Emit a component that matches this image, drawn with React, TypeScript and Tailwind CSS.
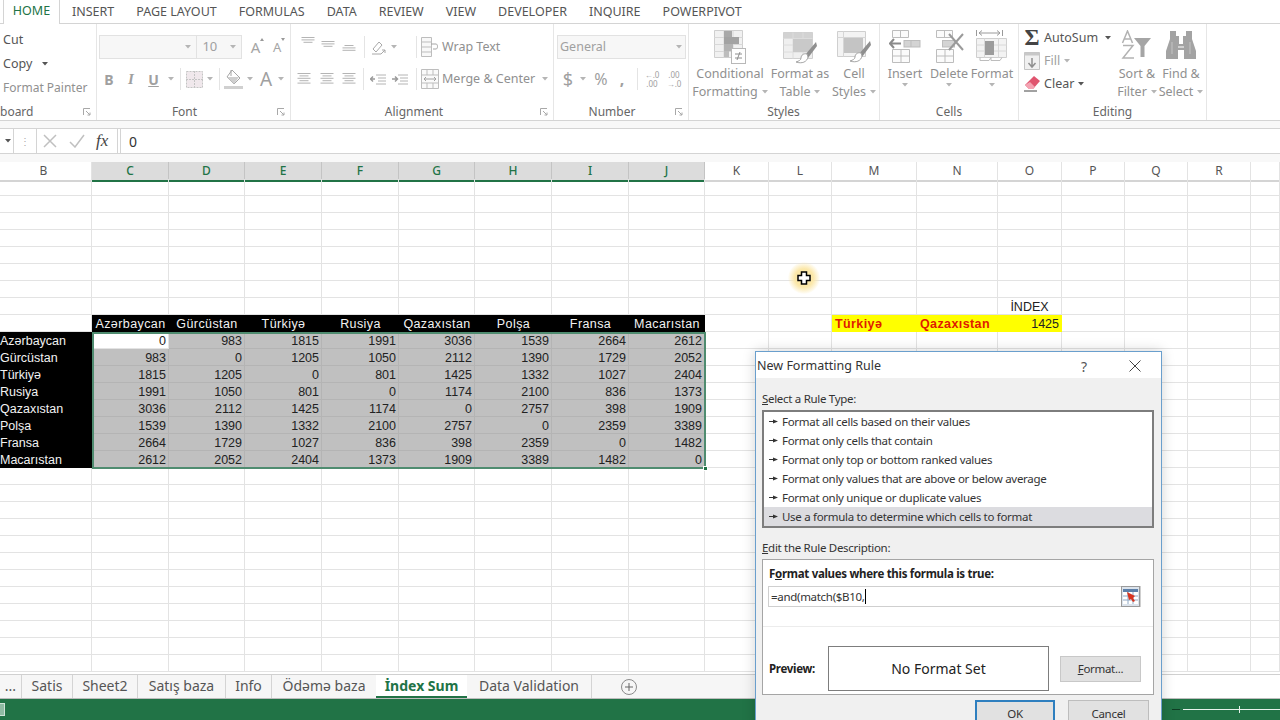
import React from 'react';

const names = ['Azərbaycan', 'Gürcüstan', 'Türkiyə', 'Rusiya', 'Qazaxıstan', 'Polşa', 'Fransa', 'Macarıstan'];
const distances = [
  [0, 983, 1815, 1991, 3036, 1539, 2664, 2612],
  [983, 0, 1205, 1050, 2112, 1390, 1729, 2052],
  [1815, 1205, 0, 801, 1425, 1332, 1027, 2404],
  [1991, 1050, 801, 0, 1174, 2100, 836, 1373],
  [3036, 2112, 1425, 1174, 0, 2757, 398, 1909],
  [1539, 1390, 1332, 2100, 2757, 0, 2359, 3389],
  [2664, 1729, 1027, 836, 398, 2359, 0, 1482],
  [2612, 2052, 2404, 1373, 1909, 3389, 1482, 0],
];

const columns = ['B', 'C', 'D', 'E', 'F', 'G', 'H', 'I', 'J', 'K', 'L', 'M', 'N', 'O', 'P', 'Q', 'R', ''];
const gridCols = 'grid grid-cols-[92px_77px_76px_77px_77px_76px_77px_77px_76px_64px_63px_85px_81px_64px_63px_63px_63px_29px]';
const ribbonTabs = ['INSERT', 'PAGE LAYOUT', 'FORMULAS', 'DATA', 'REVIEW', 'VIEW', 'DEVELOPER', 'INQUIRE', 'POWERPIVOT'];
const ruleTypes = [
  'Format all cells based on their values',
  'Format only cells that contain',
  'Format only top or bottom ranked values',
  'Format only values that are above or below average',
  'Format only unique or duplicate values',
  'Use a formula to determine which cells to format',
];

const cellFont = "font-['Liberation_Sans',Arial,sans-serif] text-[12.5px] leading-[18px]";

const Caret = ({ dark }: { dark?: boolean }) => (
  <svg width="6" height="4" viewBox="0 0 6 4" className="shrink-0">
    <path d="M0 0h6L3 3.5z" fill={dark ? '#555' : '#b5b5b5'} />
  </svg>
);

const Launcher = () => (
  <svg width="8" height="8" viewBox="0 0 8 8" className="absolute right-[5px] top-[4px]">
    <path d="M.5 7V.5H7M3 3l4 4M7 4.5V7H4.5" fill="none" stroke="#a8a8a8" />
  </svg>
);

const Sep = () => <div className="h-[22px] w-px bg-[#e4e4e4]" />;

const Group = ({ w, label, launcher, children }: { w: string; label: React.ReactNode; launcher?: boolean; children: React.ReactNode }) => (
  <div className={`flex shrink-0 flex-col border-r border-[#e6e6e6] ${w}`}>
    <div className="h-[80px]">{children}</div>
    <div className="relative h-[16px] text-center text-[12px] leading-[15px] text-[#666]">
      {label}
      {launcher && <Launcher />}
    </div>
  </div>
);

const Lines = ({ rows }: { rows: number[] }) => (
  <svg width="14" height="14" viewBox="0 0 14 14">
    {rows.map((w, i) => (
      <rect key={i} x={(14 - w) / 2} y={1 + i * 2.4} width={w} height="1" fill="#b4b4b4" />
    ))}
  </svg>
);

const LargeButton = ({ w, icon, line1, line2 }: { w: string; icon: React.ReactNode; line1: string; line2: React.ReactNode }) => (
  <div className={`flex shrink-0 flex-col items-center pt-[6px] text-[12.5px] leading-[18px] text-[#909090] ${w}`}>
    <div className="flex h-[35px] items-start justify-center">{icon}</div>
    <div className="whitespace-nowrap">{line1}</div>
    <div className="flex items-center gap-[4px] whitespace-nowrap">{line2}</div>
  </div>
);

const CondIcon = () => (
  <svg width="32" height="34" viewBox="0 0 32 34">
    <path d="M.5.5h28v27H.5z" fill="#f1f1f1" stroke="#cfcfcf" />
    <path d="M10 .5v27M19 .5v27M.5 7.5h28M.5 14.5h28M.5 21.5h28" stroke="#d8d8d8" />
    <rect x="10" y="1" width="8" height="6" fill="#a9a9a9" />
    <rect x="10" y="7" width="15" height="7" fill="#a3a3a3" />
    <rect x="10" y="14" width="9" height="7" fill="#b3b3b3" />
    <rect x="10" y="21" width="5" height="6" fill="#bdbdbd" />
    <rect x="17.5" y="18.5" width="14" height="15" fill="#fff" stroke="#b8b8b8" />
    <path d="M21 24h7M21 28h7M26 22l-3 8" stroke="#8e8e8e" fill="none" />
  </svg>
);

const TableIcon = () => (
  <svg width="34" height="34" viewBox="0 0 34 34">
    <path d="M.5 2.5h29v26H.5z" fill="#efefef" stroke="#cfcfcf" />
    <path d="M.5 2.5h29v6H.5z" fill="#d2d2d2" />
    <path d="M10 2.5v26M20 2.5v26M.5 8.5h29M.5 15h29M.5 22h29" stroke="#dcdcdc" />
    <rect x="10" y="9" width="19" height="13" fill="#c9c9c9" />
    <path d="M33 12l-11 13 3 3 9-12z" fill="#8f8f8f" />
    <path d="M24 24c-3-1-6 1-6 4 0 2-2 3-5 4 6 2 11 0 12-5z" fill="#fff" stroke="#a5a5a5" />
  </svg>
);

const StyleIcon = () => (
  <svg width="34" height="34" viewBox="0 0 34 34">
    <path d="M.5 1.5h28v25H.5z" fill="#f3f3f3" stroke="#cfcfcf" />
    <path d="M.5 7.5h28M6.5 1.5v25" stroke="#d6d6d6" />
    <rect x="7" y="8" width="19" height="15" fill="#c4c4c4" />
    <path d="M33 11l-11 13 3 3 9-12z" fill="#8f8f8f" />
    <path d="M24 23c-3-1-6 1-6 4 0 2-2 3-5 4 6 2 11 0 12-5z" fill="#fff" stroke="#a5a5a5" />
  </svg>
);

const InsertIcon = () => (
  <svg width="32" height="34" viewBox="0 0 32 34">
    <path d="M3.5.5h16v7h-16zM11.5.5v7M3.5 19.5h17v13h-17zM12 19.5v13M3.5 26h17" fill="#fbfbfb" stroke="#bdbdbd" />
    <rect x="15" y="10.5" width="16" height="6.5" fill="#d4d4d4" stroke="#bdbdbd" />
    <path d="M22 10.5v6.5" stroke="#bdbdbd" />
    <path d="M12 13.5H1M5 9l-4 4.500 4 4.500" fill="none" stroke="#8a8a8a" strokeWidth="2" />
  </svg>
);

const DeleteIcon = () => (
  <svg width="32" height="34" viewBox="0 0 32 34">
    <path d="M3.500.5h16v7h-16zM11.500.5v7M3.500 19.500h17v13h-17zM12 19.500v13M3.500 26h17" fill="#fbfbfb" stroke="#bdbdbd" />
    <rect x="9.500" y="10.500" width="12" height="6.500" fill="#d4d4d4" stroke="#bdbdbd" />
    <path d="M16 4l14 16M30 4L16 20" stroke="#9a9a9a" strokeWidth="2" />
  </svg>
);

const FormatIcon = () => (
  <svg width="32" height="34" viewBox="0 0 32 34">
    <path d="M.5 0v6M26.500 0v6M3 3h21M3 3l3-2.500M3 3l3 2.500M24 3l-3-2.500M24 3l-3 2.500" fill="none" stroke="#9a9a9a" />
    <path d="M.5 8.500h30v19H.5z" fill="#f3f3f3" stroke="#cfcfcf" />
    <path d="M8.500 8.500v19M22.500 8.500v19M.5 15h30M.5 21h30" stroke="#d8d8d8" />
    <rect x="9" y="11" width="9" height="14" fill="#9c9c9c" />
    <path d="M4 27.500v3h9l2-3M15 27.500v3h9l2-3" fill="none" stroke="#bdbdbd" />
  </svg>
);

const SortIcon = () => (
  <svg width="32" height="32" viewBox="0 0 32 32">
    <path d="M13 28H2l10-12.500H2M1.500 13L6.500 1l5 12M3.500 9h6" fill="none" stroke="#b2b2b2" strokeWidth="1.500" />
    <path d="M13 8h17l-6.500 8v11h-4V16z" fill="#a5a5a5" />
  </svg>
);

const FindIcon = () => (
  <svg width="32" height="32" viewBox="0 0 32 32">
    <path d="M5 1h6v5h3v8h4V6h3V1h6v8l4 12v8H19V20h-6v9H1v-8L5 9z" fill="#a3a3a3" />
    <path d="M13 17h6" stroke="#fff" />
    <path d="M7 12v12M25 12v12" stroke="#c4c4c4" />
  </svg>
);

const RuleArrow = () => (
  <svg width="9" height="5" viewBox="0 0 9 5" className="shrink-0">
    <path d="M0 2h4V0.500L9 2.500 4 4.500V3H0z" fill="#333" />
  </svg>
);

const RefButton = () => (
  <svg width="19" height="21" viewBox="0 0 19 21">
    <rect x=".5" y=".5" width="18" height="20" fill="#dbe3ec" stroke="#9a9a9a" />
    <rect x="2" y="3" width="15" height="15" fill="#fff" />
    <rect x="2" y="3" width="15" height="3" fill="#5c7fa8" />
    <path d="M2 10h15M2 14h15M7 6v12M12 6v12" stroke="#8fa8c4" />
    <path d="M6 6l8 4-2 2 2 3-2 1-2-3-2 1z" fill="#d8341f" />
  </svg>
);

const Ribbon = () => (
  <div className="flex h-[97px] border-b border-[#d4d4d4] bg-white">
    <Group w="w-[97px]" label={<span className="absolute left-0">board</span>} launcher>
      <div className="flex flex-col pl-[3px] pt-[4px] text-[12.5px] leading-[24px] text-[#555]">
        <div>Cut</div>
        <div className="flex items-center gap-[10px]">Copy <Caret dark /></div>
        <div className="text-[12px] text-[#909090]">Format Painter</div>
      </div>
    </Group>

    <Group w="w-[194px]" label={<span className="-ml-[18px]">Font</span>} launcher>
      <div className="flex items-center pl-[2px] pt-[11px]">
        <div className="flex h-[24px] w-[100px] items-center justify-end border border-[#e2e2e2] bg-[#f7f7f7] pr-[5px]"><Caret /></div>
        <div className="flex h-[24px] w-[45px] items-center justify-between border border-l-0 border-[#e2e2e2] bg-[#f7f7f7] px-[5px] text-[13px] text-[#a0a0a0]">10<Caret /></div>
        <div className="ml-[5px] flex w-[22px] items-start justify-center text-[15px] leading-[18px] text-[#a5a5a5]">
          A
          <svg width="4" height="3" viewBox="0 0 4 3"><path d="M0 3l2-3 2 3z" fill="#999" /></svg>
        </div>
        <div className="flex w-[22px] items-start justify-center text-[13px] leading-[18px] text-[#a5a5a5]">
          A
          <svg width="4" height="3" viewBox="0 0 4 3"><path d="M0 0h4L2 3z" fill="#999" /></svg>
        </div>
      </div>
      <div className="mt-[8px] flex h-[24px] items-center pl-[1px] text-[#a0a0a0]">
        <div className="flex w-[22px] justify-center text-[14px] font-bold">B</div>
        <div className="flex w-[22px] justify-center font-['Liberation_Serif',serif] text-[15px] font-bold italic">I</div>
        <div className="flex w-[23px] justify-center text-[14px] font-bold underline">U</div>
        <div className="flex w-[12px] justify-center"><Caret /></div>
        <div className="flex w-[6px] justify-center"><Sep /></div>
        <div className="flex w-[22px] justify-center">
          <svg width="17" height="17" viewBox="0 0 17 17">
            <path d="M.5.5h16v16H.5z" fill="#f0e8ec" stroke="#c4c4c4" strokeDasharray="2 1" />
            <path d="M8.500 0v17M0 8.500h17" stroke="#c4c4c4" strokeDasharray="2 1" />
          </svg>
        </div>
        <div className="flex w-[10px] justify-center"><Caret /></div>
        <div className="flex w-[8px] justify-center"><Sep /></div>
        <div className="flex w-[22px] justify-center">
          <svg width="20" height="20" viewBox="0 0 20 20">
            <path d="M8 1l8 8-6 6-7-7z" fill="#fff" stroke="#a5a5a5" />
            <path d="M3 8h12l-5 7z" fill="#cfcfcf" />
            <path d="M7 1v6" stroke="#a5a5a5" />
            <rect x="0" y="17" width="19" height="3" fill="#d0d0d0" />
          </svg>
        </div>
        <div className="flex w-[10px] justify-center"><Caret /></div>
        <div className="flex w-[22px] justify-center text-[19px] leading-none">A</div>
        <div className="flex w-[8px] justify-center"><Caret /></div>
      </div>
    </Group>

    <Group w="w-[263px]" label={<span className="-ml-[16px]">Alignment</span>} launcher>
      <div className="mt-[11px] flex h-[24px] items-center pl-[7px]">
        <div className="flex w-[20px] justify-center pb-[8px]"><Lines rows={[13, 13, 9]} /></div>
        <div className="flex w-[20px] justify-center"><Lines rows={[13, 13, 9]} /></div>
        <div className="flex w-[22px] justify-center pt-[8px]"><Lines rows={[9, 13, 13]} /></div>
        <div className="mx-[3px] flex w-[2px] justify-center"><Sep /></div>
        <div className="flex w-[22px] justify-center">
          <svg width="16" height="16" viewBox="0 0 16 16">
            <path d="M2 10l6-7 3 3-6 7zM1 15h9l4-4M14 11v3M14 11h-3" fill="none" stroke="#a8a8a8" />
          </svg>
        </div>
        <div className="flex w-[8px] justify-center"><Caret /></div>
        <div className="w-[14px]" />
        <div className="flex w-[8px] justify-center"><Sep /></div>
        <div className="flex w-[20px] justify-center">
          <svg width="18" height="20" viewBox="0 0 18 20">
            <path d="M.5.5h10v19H.5z" fill="#f8f8f8" stroke="#bdbdbd" />
            <path d="M0 5h10M0 10h10M0 15h10" stroke="#bdbdbd" />
            <path d="M10 7h5c2 0 2 5 0 5h-3" fill="none" stroke="#a5a5a5" />
          </svg>
        </div>
        <div className="ml-[2px] text-[12.5px] text-[#909090]">Wrap Text</div>
      </div>
      <div className="mt-[8px] flex h-[24px] items-center pl-[3px]">
        <div className="flex w-[20px] justify-center"><Lines rows={[13, 9, 13, 9, 13]} /></div>
        <div className="flex w-[26px] justify-center"><Lines rows={[13, 9, 13, 9, 13]} /></div>
        <div className="flex w-[18px] justify-center"><Lines rows={[13, 9, 13, 9, 13]} /></div>
        <div className="flex w-[10px] justify-center"><Sep /></div>
        <div className="flex w-[20px] justify-center">
          <svg width="16" height="12" viewBox="0 0 16 12">
            <path d="M6 2h10M8 5h8M8 8h8M6 11h10" stroke="#b4b4b4" />
            <path d="M5 6H0M3 3.500L.5 6 3 8.500" fill="none" stroke="#9a9a9a" strokeWidth="1.500" />
          </svg>
        </div>
        <div className="flex w-[24px] justify-center">
          <svg width="16" height="12" viewBox="0 0 16 12">
            <path d="M6 2h10M8 5h8M8 8h8M6 11h10" stroke="#b4b4b4" />
            <path d="M0 6h5M3 3.500L5.500 6 3 8.500" fill="none" stroke="#9a9a9a" strokeWidth="1.500" />
          </svg>
        </div>
        <div className="flex w-[8px] justify-center"><Sep /></div>
        <div className="flex w-[20px] justify-center">
          <svg width="18" height="20" viewBox="0 0 18 20">
            <path d="M.5.500h17v19H.5z" fill="#fafafa" stroke="#bdbdbd" />
            <path d="M0 6h18M0 14h18M6 0v6M12 0v6M6 14v6M12 14v6" stroke="#bdbdbd" />
            <path d="M3 10h12M5 8l-2 2 2 2M13 8l2 2-2 2" fill="none" stroke="#a0a0a0" />
          </svg>
        </div>
        <div className="ml-[2px] flex items-center gap-[7px] text-[12.5px] text-[#909090]">Merge &amp; Center <Caret /></div>
      </div>
    </Group>

    <Group w="w-[135px]" label={<span className="-ml-[18px]">Number</span>} launcher>
      <div className="mt-[11px] flex h-[24px] items-center pl-[3px]">
        <div className="flex h-[24px] w-[129px] items-center justify-between border border-[#e2e2e2] bg-[#f7f7f7] pl-[2px] pr-[3px] text-[12.5px] text-[#a0a0a0]">General <Caret /></div>
      </div>
      <div className="mt-[8px] flex h-[24px] items-center pl-[4px] text-[#a0a0a0]">
        <div className="flex w-[20px] justify-center text-[18px] leading-none">$</div>
        <div className="flex w-[10px] justify-center"><Caret /></div>
        <div className="ml-[3px] flex w-[20px] justify-center text-[16px] leading-none">%</div>
        <div className="flex w-[22px] justify-center text-[16px] font-bold leading-none">,</div>
        <div className="flex w-[8px] justify-center"><Sep /></div>
        <div className="flex w-[22px] flex-col items-center text-[8px] leading-[9px]"><span>←.0</span><span>.00</span></div>
        <div className="flex w-[22px] flex-col items-center text-[8px] leading-[9px]"><span>.00</span><span>→.0</span></div>
      </div>
    </Group>

    <Group w="w-[191px]" label={<span className="-ml-[1px]">Styles</span>} launcher={false}>
      <div className="flex">
        <LargeButton w="w-[82px]" icon={<CondIcon />} line1="Conditional" line2={<>Formatting <Caret /></>} />
        <LargeButton w="w-[58px]" icon={<TableIcon />} line1="Format as" line2={<>Table <Caret /></>} />
        <LargeButton w="w-[50px]" icon={<StyleIcon />} line1="Cell" line2={<>Styles <Caret /></>} />
      </div>
    </Group>

    <Group w="w-[139px]" label="Cells">
      <div className="flex pl-[3px]">
        <LargeButton w="w-[44px]" icon={<InsertIcon />} line1="Insert" line2={<Caret />} />
        <LargeButton w="w-[44px]" icon={<DeleteIcon />} line1="Delete" line2={<Caret />} />
        <LargeButton w="w-[42px]" icon={<FormatIcon />} line1="Format" line2={<Caret />} />
      </div>
    </Group>

    <Group w="w-[188px]" label="Editing">
      <div className="flex">
        <div className="flex w-[96px] shrink-0 flex-col pl-[5px] pt-[2px] text-[12.5px] leading-[23px] text-[#555]">
          <div className="flex h-[23px] items-center">
            <div className="flex w-[20px] justify-center pr-[4px] font-['Liberation_Serif',serif] text-[23px] font-bold leading-none text-[#444]">Σ</div>
            <span>AutoSum</span>
            <span className="ml-[7px]"><Caret dark /></span>
          </div>
          <div className="flex h-[23px] items-center text-[#a0a0a0]">
            <div className="flex w-[20px] justify-center pr-[4px]">
              <svg width="16" height="18" viewBox="0 0 16 18" className="shrink-0">
                <path d="M.5.500h15v17H.5z" fill="#f0f0f0" stroke="#c4c4c4" />
                <path d="M.5.500h15v3H.5z" fill="#c8c8c8" />
                <path d="M8 6v9M4.500 11L8 15l3.500-4" fill="none" stroke="#8f8f8f" strokeWidth="1.500" />
              </svg>
            </div>
            <span>Fill</span>
            <span className="ml-[4px]"><Caret /></span>
          </div>
          <div className="flex h-[23px] items-center">
            <div className="flex w-[20px] justify-center pr-[4px]">
              <svg width="17" height="17" viewBox="0 0 17 17" className="shrink-0">
                <path d="M10 1l6 5-7 8H5L1 10z" fill="#e0556f" />
                <path d="M1 10l4 4h4l2-2-5-5z" fill="#f4a3b2" />
                <path d="M0 16h13" stroke="#444" />
              </svg>
            </div>
            <span>Clear</span>
            <span className="ml-[4px]"><Caret dark /></span>
          </div>
        </div>
        <LargeButton w="w-[44px]" icon={<SortIcon />} line1="Sort &" line2={<>Filter <Caret /></>} />
        <LargeButton w="w-[44px]" icon={<FindIcon />} line1="Find &" line2={<>Select <Caret /></>} />
      </div>
    </Group>
    <div className="flex-1" />
  </div>
);

const Sheet = () => {
  const rows = Array.from({ length: 29 }, (_, i) => i);
  return (
    <div className="relative h-[493px]">
      <div className={gridCols}>
        {rows.flatMap(r =>
          columns.map((_, c) => {
            const key = `${r}-${c}`;
            const line = 'h-[17px] border-b border-r border-[#e3e3e3]';
            if (r === 7 && c === 13) {
              return <div key={key} className={`${line} text-center ${cellFont} text-[#222]`}>İNDEX</div>;
            }
            if (r === 8 && c >= 1 && c <= 8) {
              return <div key={key} className={`h-[17px] bg-black text-center ${cellFont} whitespace-nowrap tracking-[0.4px] text-[#f2f2f2]`}>{names[c - 1]}</div>;
            }
            if (r === 8 && c === 11) {
              return <div key={key} className={`h-[17px] bg-[#ffff00] pl-[3px] ${cellFont} font-bold tracking-[0.4px] text-[#e01a00]`}>Türkiyə</div>;
            }
            if (r === 8 && c === 12) {
              return <div key={key} className={`h-[17px] bg-[#ffff00] pl-[3px] ${cellFont} font-bold tracking-[0.4px] text-[#e01a00]`}>Qazaxıstan</div>;
            }
            if (r === 8 && c === 13) {
              return <div key={key} className={`h-[17px] bg-[#ffff00] pr-[3px] text-right ${cellFont} text-[#222]`}>1425</div>;
            }
            if (r >= 9 && r <= 16 && c === 0) {
              return <div key={key} className={`h-[17px] bg-black ${cellFont} whitespace-nowrap text-[#f2f2f2]`}>{names[r - 9]}</div>;
            }
            if (r >= 9 && r <= 16 && c >= 1 && c <= 8) {
              const active = r === 9 && c === 1;
              return (
                <div key={key} className={`h-[17px] border-b border-r pr-[2px] text-right ${cellFont} text-[#222] ${active ? 'border-[#e3e3e3] bg-white' : 'border-[#b4b4b4] bg-[#c0c0c0]'}`}>
                  {distances[r - 9][c - 1]}
                </div>
              );
            }
            return <div key={key} className={line} />;
          })
        )}
      </div>
      {/* selection outline */}
      <div className="pointer-events-none absolute left-[92px] top-[153px] h-[137px] w-[614px] border-2 border-[#4f8c70]" />
      <div className="absolute left-[703px] top-[287px] h-[5px] w-[5px] border border-white bg-[#217346]" />
    </div>
  );
};

const SheetTabs = () => (
  <div className="flex h-[24px] items-stretch border-b border-[#bdbdbd] bg-[#f6f6f6] text-[14px] leading-[22px] text-[#555]">
    <div className="flex w-[22px] justify-center border-r border-[#d4d4d4]">...</div>
    <div className="flex w-[51px] justify-center border-r border-[#d4d4d4]">Satis</div>
    <div className="flex w-[65px] justify-center border-r border-[#d4d4d4]">Sheet2</div>
    <div className="flex w-[88px] justify-center border-r border-[#d4d4d4]">Satış baza</div>
    <div className="flex w-[46px] justify-center border-r border-[#d4d4d4]">Info</div>
    <div className="flex w-[104px] justify-center">Ödəmə baza</div>
    <div className="flex w-[91px] justify-center border-b-2 border-[#217346] bg-white font-bold text-[#217346]">İndex Sum</div>
    <div className="flex w-[125px] justify-center border-r border-[#d4d4d4]">Data Validation</div>
    <div className="ml-[29px] flex items-center">
      <svg width="16" height="16" viewBox="0 0 16 16">
        <circle cx="8" cy="8" r="7.500" fill="none" stroke="#8a8a8a" />
        <path d="M8 4v8M4 8h8" stroke="#666" />
      </svg>
    </div>
    <div className="ml-auto w-[119px] bg-white" />
  </div>
);

const StatusBar = () => (
  <div className="flex h-[21px] items-center justify-between bg-[#217346]">
    <div className="h-[13px] w-[5px] border border-l-0 border-[#cfe3d8] bg-[#8fbba3]" />
    <div className="flex items-center">
      <div className="h-px w-[8px] bg-[#0f3d24]" />
      <div className="relative ml-[3px] h-px w-[97px] bg-[#e8f2ec]">
        <div className="absolute left-[56px] top-[-3px] h-[7px] w-px bg-[#e8f2ec]" />
      </div>
    </div>
  </div>
);

const FormattingDialog = () => (
  <div className="absolute left-[755px] top-[351px] h-[380px] w-[407px] border border-[#6a9fcd] bg-[#f0f0f0] text-[11.5px] tracking-[-0.3px] text-[#333] shadow-[0_0_12px_rgba(0,0,0,0.18)]">
    <div className="flex h-[26px] items-center justify-between bg-white pl-[1px] pr-[20px] pt-[2px] text-[12.5px] tracking-normal text-[#333]">
      <span>New Formatting Rule</span>
      <div className="flex items-center gap-[42px]">
        <span className="text-[14px] text-[#555]">?</span>
        <svg width="12" height="12" viewBox="0 0 12 12">
          <path d="M.5.500l11 11M11.500.500l-11 11" stroke="#444" />
        </svg>
      </div>
    </div>
    <div className="ml-[6px] mt-[13px] h-[16px] leading-[16px]"><u>S</u>elect a Rule Type:</div>
    <div className="ml-[6px] mt-[3px] w-[392px] border-2 border-[#7d7d7d] bg-white">
      {ruleTypes.map((rule, i) => (
        <div key={rule} className={`flex h-[19px] items-center gap-[3px] pl-[5px] ${i === 5 ? 'bg-[#dcdce0]' : ''}`}>
          <RuleArrow />
          <span className="pl-[1px]">{rule}</span>
        </div>
      ))}
    </div>
    <div className="ml-[6px] mt-[12px] h-[16px] leading-[16px]"><u>E</u>dit the Rule Description:</div>
    <div className="ml-[6px] mt-[3px] h-[136px] w-[392px] border border-[#a5a5a5] bg-white">
      <div className="ml-[6px] mt-[7px] h-[14px] font-bold leading-[14px] text-[#222]">F<u>o</u>rmat values where this formula is true:</div>
      <div className="ml-[5px] mt-[5px] flex h-[21px] w-[373px] items-center justify-between border border-[#cfcfcf] bg-white pl-[2px]">
        <span className="flex items-center">=and(match($B10,<span className="h-[15px] w-px bg-black" /></span>
        <RefButton />
      </div>
      <div className="mt-[19px] h-px bg-[#ececec]" />
      <div className="mt-[19px] flex items-center pl-[6px]">
        <span className="w-[59px] font-bold text-[#222]">Preview:</span>
        <div className="flex h-[45px] w-[221px] items-center justify-center border border-[#7d7d7d] bg-white text-[14px] tracking-normal text-[#222]">No Format Set</div>
        <div className="ml-[11px] flex h-[26px] w-[81px] items-center justify-center border border-[#c8c8c8] bg-[#e1e1e1]"><span><u>F</u>ormat...</span></div>
      </div>
    </div>
    <div className="mt-[5px] flex justify-end gap-[13px] pr-[12px]">
      <div className="flex h-[28px] w-[80px] items-center justify-center border-2 border-[#2f7fbf] bg-[#e1e1e1]">OK</div>
      <div className="flex h-[28px] w-[81px] items-center justify-center border border-[#bdbdbd] bg-[#e1e1e1]">Cancel</div>
    </div>
  </div>
);

export default function App() {
  return (
    <div className="relative h-[720px] w-[1280px] overflow-hidden bg-white font-['Noto_Sans',sans-serif]">
      {/* ribbon tabs */}
      <div className="flex h-[24px] items-end border-b border-[#d4d4d4] pl-[3px] text-[12.5px] leading-[22px] text-[#555]">
        <div className="-mb-px flex h-[24px] w-[57px] justify-center border-x border-[#d4d4d4] bg-white text-[#217346]">HOME</div>
        <div className="flex gap-[22px] pl-[12px]">
          {ribbonTabs.map(t => <span key={t}>{t}</span>)}
        </div>
      </div>

      <Ribbon />
      <div className="h-[7px] bg-[#f8f8f8]" />

      {/* formula bar */}
      <div className="flex h-[26px] items-stretch border-y border-[#d4d4d4] bg-white">
        <div className="flex w-[14px] items-center justify-end border-r border-[#d4d4d4] pr-[2px]"><Caret dark /></div>
        <div className="flex w-[22px] items-center justify-center text-[10px] text-[#aaa]">⋮</div>
        <div className="flex w-[82px] items-center border-x border-[#d4d4d4]">
          <svg width="16" height="14" viewBox="0 0 16 14" className="ml-[5px]">
            <path d="M2 1l12 12M14 1L2 13" stroke="#c0c0c0" strokeWidth="1.500" />
          </svg>
          <svg width="16" height="14" viewBox="0 0 16 14" className="ml-[11px]">
            <path d="M1 8l5 5L15 1" fill="none" stroke="#c0c0c0" strokeWidth="1.500" />
          </svg>
          <span className="ml-[11px] font-['Liberation_Serif',serif] text-[17px] italic text-[#444]">fx</span>
        </div>
        <div className="ml-[2px] flex flex-1 items-center border-l border-[#d4d4d4] pl-[8px] text-[14px] text-[#333]">0</div>
      </div>
      <div className="h-[8px] bg-[#f8f8f8]" />

      {/* column headers */}
      <div className={`${gridCols} h-[17px] text-[12px] leading-[18px]`}>
        {columns.map((c, i) => (
          <div
            key={i}
            className={i >= 1 && i <= 8
              ? 'border-b-2 border-r border-b-[#217346] border-r-[#c4c4c4] bg-[#dcdcdc] text-center font-medium text-[#217346]'
              : i === 0
                ? 'border-b-2 border-r border-b-[#d4d4d4] border-r-[#e3e3e3] pr-[4px] text-center text-[#555]'
                : 'border-b-2 border-r border-b-[#d4d4d4] border-r-[#e3e3e3] text-center text-[#555]'}
          >
            {c}
          </div>
        ))}
      </div>

      <Sheet />
      <div className="h-[3px] border-b border-[#d0d0d0]" />
      <SheetTabs />
      <StatusBar />

      <FormattingDialog />

      {/* mouse pointer highlight */}
      <div className="absolute left-[788px] top-[262px] flex h-[32px] w-[32px] items-center justify-center rounded-full bg-[radial-gradient(circle,#fbe7a8_40%,rgba(255,255,255,0)_72%)]">
        <svg width="14" height="14" viewBox="0 0 14 14">
          <path d="M4.500 1h5v3.500H13v5H9.500V13h-5V9.500H1v-5h3.500z" fill="#fff" stroke="#000" strokeWidth="1.500" />
        </svg>
      </div>
    </div>
  );
}
